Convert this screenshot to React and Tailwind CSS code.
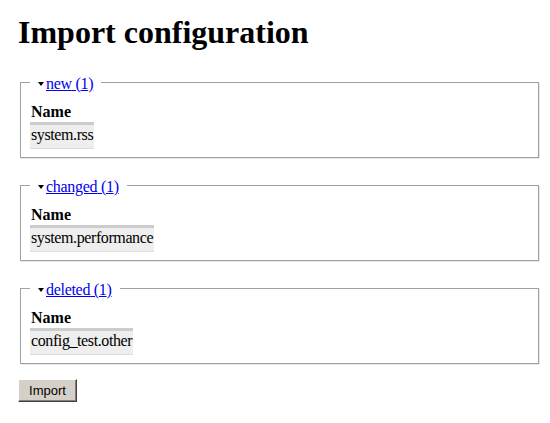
import React from 'react';

const sections = [
  { label: 'new', items: ['system.rss'] },
  { label: 'changed', items: ['system.performance'] },
  { label: 'deleted', items: ['config_test.other'] },
];

const serif = { fontFamily: '"Liberation Serif", "Times New Roman", serif' };

const Section = ({ label, items }) => (
  <fieldset className="mx-[2px] mb-[16px] border border-[#a0a0a0] px-[9px] pt-[10px] pb-[8px] shadow-[1px_1px_0_#e8e8e8]">
    <legend className="px-[8px] pt-[4px] text-[16px] leading-[18px] h-[22px] tracking-[-0.3px]">
      <span className="inline-block align-middle mr-[2px] mb-[3px] w-0 h-0 border-l-[3px] border-r-[3px] border-t-[4px] border-l-transparent border-r-transparent border-t-black" />
      <a href="#" className="text-[#0000ee] underline">
        {label} ({items.length})
      </a>
    </legend>
    <table className="border-collapse">
      <thead>
        <tr>
          <th className="text-left font-bold px-[1px] pb-[1px] leading-[18px]">Name</th>
        </tr>
      </thead>
      <tbody>
        {items.map((item) => (
          <tr key={item}>
            <td className="bg-[#eeeeee] border-t-[3px] border-t-[#cccccc] border-b border-b-[#dddddd] px-[1px] pt-[1px] pb-[4px] leading-[18px] tracking-[-0.4px]">
              {item}
            </td>
          </tr>
        ))}
      </tbody>
    </table>
  </fieldset>
);

export default function App() {
  return (
    <div className="bg-white text-black pl-[18px] pr-[9px] pt-[16px] pb-[20px]" style={serif}>
      <h1 className="text-[32px] leading-[32px] font-bold mb-[23px]">Import configuration</h1>
      {sections.map((s) => (
        <Section key={s.label} label={s.label} items={s.items} />
      ))}
      <button
        className="block mt-[-1px] h-[23px] w-[59px] bg-[#d4d0c8] text-[13px] leading-none text-black border border-t-white border-l-white border-r-[#404040] border-b-[#404040] shadow-[inset_-1px_-1px_0_#808080]"
        style={{ fontFamily: '"Liberation Sans", Arial, sans-serif' }}
      >
        Import
      </button>
    </div>
  );
}
